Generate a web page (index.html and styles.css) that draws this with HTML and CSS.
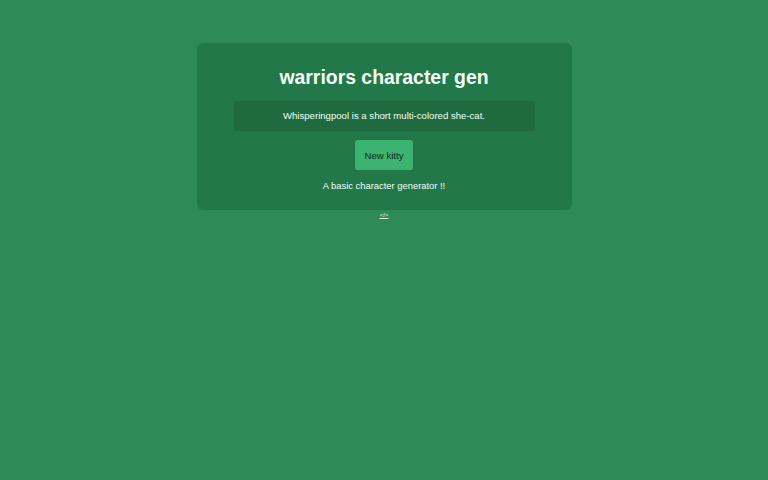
FILE: index.html
```html
<!DOCTYPE html>
<html lang="en">
<head>
<meta charset="utf-8">
<title>warriors character gen</title>
<link rel="stylesheet" href="styles.css">
</head>
<body>
<main class="card">
  <h1 class="title">warriors character gen</h1>
  <div class="result">Whisperingpool is a short multi-colored she-cat.</div>
  <button class="btn" type="button">New kitty</button>
  <p class="blurb">A basic character generator !!</p>
</main>
<footer class="foot"><a href="#" class="src">&lt;/&gt;</a></footer>
</body>
</html>
```
FILE: styles.css
```css
html, body {
  margin: 0;
  padding: 0;
}
body {
  background: #2e8b57;
  font-family: "Liberation Sans", Arial, sans-serif;
  color: #f0fff4;
  padding-top: 43px;
}
.card {
  width: 375px;
  box-sizing: border-box;
  margin: 0 auto;
  background: #23784a;
  border-radius: 6px;
  padding: 22px 37px 18px;
  display: flex;
  flex-direction: column;
  align-items: center;
}
.title {
  margin: 0;
  font-size: 19.4px;
  font-weight: bold;
  line-height: 24px;
  color: #f4fff6;
}
.result {
  margin-top: 12px;
  width: 100%;
  height: 30px;
  box-sizing: border-box;
  background: #1f6b3f;
  border-radius: 3px;
  font-size: 9.6px;
  line-height: 30px;
  text-align: center;
}
.btn {
  margin-top: 9px;
  width: 58px;
  height: 30px;
  background: #3cb371;
  border: none;
  border-radius: 3px;
  font-family: inherit;
  font-size: 9.6px;
  color: #0c2816;
  padding: 0;
}
.blurb {
  margin: 10px 0 0;
  font-size: 9.4px;
  line-height: 12px;
}
.foot {
  text-align: center;
  margin-top: 2px;
  font-size: 6px;
  line-height: 7px;
}
.src {
  color: #e6f5ea;
}
```
